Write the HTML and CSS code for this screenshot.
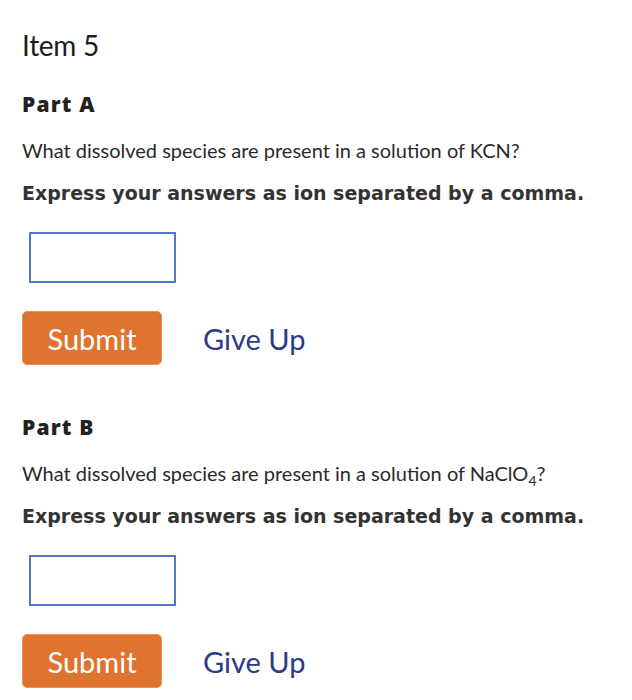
FILE: index.html
```html
<!DOCTYPE html>
<html lang="en">
<head>
<meta charset="utf-8">
<title>Item 5</title>
<link rel="stylesheet" href="styles.css">
</head>
<body>
<main class="page">
  <h1 class="item-title">Item 5</h1>
  <section class="part">
    <h2 class="part-title">Part A</h2>
    <p class="question">What dissolved species are present in a solution of KCN?</p>
    <p class="instruction">Express your answers as ion separated by a comma.</p>
    <input class="answer" type="text" aria-label="Part A answer">
    <div class="actions">
      <button class="submit" type="button">Submit</button>
      <a class="give-up" href="#">Give Up</a>
    </div>
  </section>
  <section class="part">
    <h2 class="part-title">Part B</h2>
    <p class="question">What dissolved species are present in a solution of NaClO<span class="sub">4</span>?</p>
    <p class="instruction">Express your answers as ion separated by a comma.</p>
    <input class="answer" type="text" aria-label="Part B answer">
    <div class="actions">
      <button class="submit" type="button">Submit</button>
      <a class="give-up" href="#">Give Up</a>
    </div>
  </section>
</main>
</body>
</html>
```
FILE: styles.css
```css
html, body {
  margin: 0;
  padding: 0;
  background: #ffffff;
}

.page {
  padding: 30px 0 0 22px;
  font-family: Lato, "Open Sans", sans-serif;
  color: #222222;
}

.item-title {
  margin: 0;
  font-size: 28px;
  font-weight: 400;
  letter-spacing: -0.3px;
  line-height: 30px;
  color: #1c1c1c;
}

.part {
  display: flex;
  flex-direction: column;
  align-items: flex-start;
  margin-top: 32px;
}

.part + .part {
  margin-top: 50px;
}

.part-title {
  margin: 0;
  height: 24px;
  font-family: "Open Sans", Lato, sans-serif;
  font-size: 21px;
  font-weight: 800;
  letter-spacing: 1.2px;
  line-height: 24px;
  color: #222222;
}

.question {
  margin: 22px 0 0;
  height: 24px;
  font-size: 20px;
  font-weight: 400;
  line-height: 24px;
  color: #2a2a2a;
}

.sub {
  font-size: 14px;
  vertical-align: sub;
  line-height: 0;
}

.instruction {
  margin: 19px 0 0;
  height: 24px;
  font-family: "DejaVu Sans", Verdana, sans-serif;
  font-size: 19px;
  font-weight: 700;
  line-height: 24px;
  color: #333333;
}

.answer {
  box-sizing: border-box;
  margin: 27px 0 0 7px;
  width: 147px;
  height: 51px;
  border: 2px solid #5476c9;
  border-radius: 0;
  padding: 0 6px;
  background: #ffffff;
  outline: none;
}

.actions {
  display: flex;
  align-items: center;
  gap: 41px;
  margin-top: 28px;
}

.submit {
  box-sizing: border-box;
  width: 140px;
  height: 54px;
  border: 1px solid #e9964f;
  border-radius: 5px;
  background: #df7430;
  color: #ffffff;
  font-family: Lato, "Open Sans", sans-serif;
  font-size: 29px;
  font-weight: 400;
  padding: 0;
  cursor: pointer;
}

.give-up {
  font-size: 29px;
  color: #2d3a86;
  text-decoration: none;
}
```
